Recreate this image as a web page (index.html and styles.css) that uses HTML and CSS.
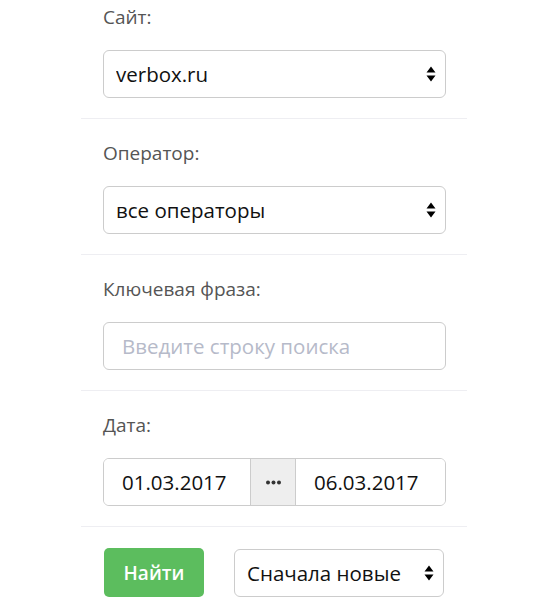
FILE: index.html
```html
<!DOCTYPE html>
<html lang="ru">
<head>
  <meta charset="UTF-8">
  <meta name="viewport" content="width=device-width, initial-scale=1.0">
  <title>Фильтр диалогов</title>
  <link rel="stylesheet" href="styles.css">
</head>
<body>
  <form class="filters" onsubmit="return false">
    <div class="field first">
      <label class="field-label">Сайт:</label>
      <div class="select-wrap">
        <select class="control">
          <option>verbox.ru</option>
        </select>
        <svg class="arrows" width="10" height="16" viewBox="0 0 10 16"><path d="M5 0.5 L9.5 6.5 L0.5 6.5 Z M5 15.5 L9.5 9.5 L0.5 9.5 Z" fill="#000"/></svg>
      </div>
    </div>

    <div class="field">
      <label class="field-label">Оператор:</label>
      <div class="select-wrap">
        <select class="control">
          <option>все операторы</option>
        </select>
        <svg class="arrows" width="10" height="16" viewBox="0 0 10 16"><path d="M5 0.5 L9.5 6.5 L0.5 6.5 Z M5 15.5 L9.5 9.5 L0.5 9.5 Z" fill="#000"/></svg>
      </div>
    </div>

    <div class="field">
      <label class="field-label">Ключевая фраза:</label>
      <input class="control text-input" type="text" placeholder="Введите строку поиска">
    </div>

    <div class="field">
      <label class="field-label">Дата:</label>
      <div class="date-range">
        <input class="date-input date-from" type="text" value="01.03.2017">
        <span class="date-sep">
          <svg width="15" height="5" viewBox="0 0 15 5"><circle cx="2" cy="2.5" r="2" fill="#333"/><circle cx="7.5" cy="2.5" r="2" fill="#333"/><circle cx="13" cy="2.5" r="2" fill="#333"/></svg>
        </span>
        <input class="date-input" type="text" value="06.03.2017">
      </div>
    </div>

    <div class="actions">
      <button class="btn-search" type="submit">Найти</button>
      <div class="select-wrap sort">
        <select class="control">
          <option>Сначала новые</option>
          <option>Сначала старые</option>
        </select>
        <svg class="arrows" width="10" height="16" viewBox="0 0 10 16"><path d="M5 0.5 L9.5 6.5 L0.5 6.5 Z M5 15.5 L9.5 9.5 L0.5 9.5 Z" fill="#000"/></svg>
      </div>
    </div>
  </form>
</body>
</html>
```

FILE: styles.css
```css
body {
  margin: 0;
  padding: 0;
  background: #fff;
  font-family: "Open Sans", "Liberation Sans", sans-serif;
  color: #111;
}

.filters {
  width: 386px;
  margin: 0 0 0 81px;
}

.field {
  padding: 22px 21px 20px 22px;
  border-bottom: 1px solid #eeeef2;
}

.field.first {
  padding-top: 5px;
}

.field-label {
  display: block;
  font-size: 19px;
  line-height: 24px;
  color: #555;
  margin-bottom: 21px;
}

.control {
  display: block;
  width: 100%;
  height: 48px;
  box-sizing: border-box;
  padding: 0 12px;
  font-family: inherit;
  font-size: 20.5px;
  color: #111;
  background: #fff;
  border: 1px solid #ccc;
  border-radius: 6px;
  outline: none;
  -webkit-appearance: none;
  appearance: none;
}

.text-input {
  padding-left: 18px;
}

.control::placeholder {
  color: #b6bac9;
}

.select-wrap {
  position: relative;
}

.select-wrap .arrows {
  position: absolute;
  right: 10px;
  top: 16px;
  pointer-events: none;
}

.date-range {
  display: flex;
  height: 48px;
  border: 1px solid #ccc;
  border-radius: 6px;
  box-sizing: border-box;
  overflow: hidden;
}

.date-input {
  flex: 1;
  min-width: 0;
  box-sizing: border-box;
  border: none;
  outline: none;
  font-family: inherit;
  font-size: 20.5px;
  color: #111;
  padding: 0 0 0 18px;
}

.date-from {
  flex: 0 0 146px;
}

.date-sep {
  width: 44px;
  flex: none;
  display: flex;
  align-items: center;
  justify-content: center;
  background: #eee;
  border-left: 1px solid #ccc;
  border-right: 1px solid #ccc;
}

.actions {
  display: flex;
  gap: 30px;
  padding: 21px 21px 0 23px;
}

.btn-search {
  width: 100px;
  height: 49px;
  border: none;
  border-radius: 5px;
  background: #5cbd5e;
  color: #fff;
  font-family: inherit;
  font-size: 19px;
  font-weight: 600;
  cursor: pointer;
}

.sort {
  width: 210px;
  margin-top: 1px;
}

.sort .control {
  height: 48px;
}
```
